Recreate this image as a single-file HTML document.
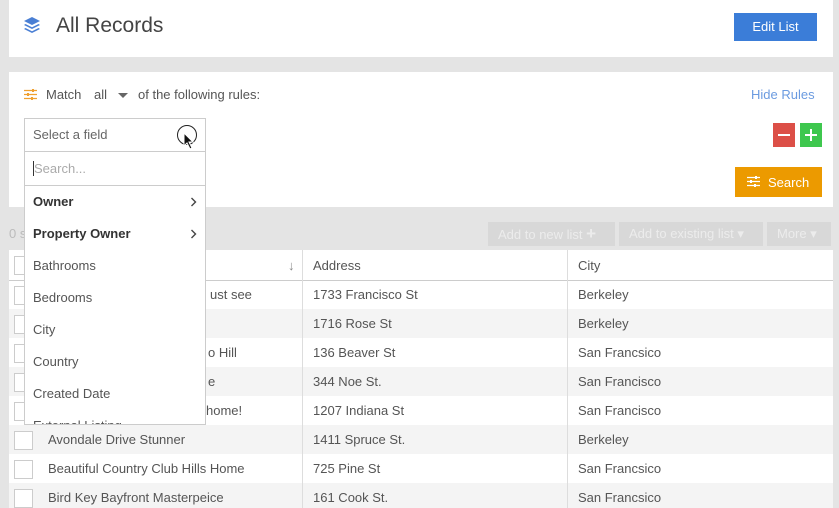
<!DOCTYPE html>
<html><head><style>
*{box-sizing:border-box;margin:0;padding:0}
html,body{width:839px;height:508px;overflow:hidden}
body{background:#e4e4e4;font-family:"Liberation Sans",sans-serif;position:relative;color:#555}
.abs{position:absolute}
.t{font-size:13px;white-space:nowrap}
</style></head><body>
<div class="abs" style="left:9px;top:0;width:824px;height:57px;background:#fff"></div>
<svg class="abs" style="left:23px;top:16px" width="18" height="19" viewBox="0 0 18 19"><path d="M9 1L17 5 9 9 1 5Z" fill="#4a7fd4"/><path d="M2.5 8L9 11.2 15.5 8 17 9 9 13 1 9Z" fill="#4a7fd4"/><path d="M2.5 12L9 15.2 15.5 12 17 13 9 17 1 13Z" fill="#4a7fd4"/></svg>
<div class="abs" style="left:56px;top:14px;font-size:21px;color:#444">All Records</div>
<div class="abs t" style="left:734px;top:13px;width:83px;height:28px;background:#3b7dd8;color:#fff;text-align:center;line-height:28px">Edit List</div>

<div class="abs" style="left:9px;top:72px;width:824px;height:135px;background:#fff"></div>
<svg class="abs" style="left:24px;top:89px" width="13" height="11"><g stroke="#f0a030" stroke-width="1.3"><path d="M0 1.5H13M0 5.5H13M0 9.5H13"/></g><g fill="#f0a030"><rect x="8" y="0" width="2" height="3"/><rect x="3" y="4" width="2" height="3"/><rect x="7" y="8" width="2" height="3"/></g></svg>
<div class="abs t" style="left:46px;top:87px">Match</div>
<div class="abs t" style="left:94px;top:87px">all</div>
<div class="abs" style="left:118px;top:93px;border:5px solid transparent;border-top:5px solid #666;border-bottom:0"></div>
<div class="abs t" style="left:138px;top:87px">of the following rules:</div>
<div class="abs t" style="left:751px;top:87px;color:#6b9be0">Hide Rules</div>
<div class="abs" style="left:773px;top:123px;width:22px;height:24px;background:#dc4f47"><div class="abs" style="left:5px;top:11px;width:12px;height:2px;background:#fff"></div></div>
<div class="abs" style="left:800px;top:123px;width:22px;height:24px;background:#3ec74e"><div class="abs" style="left:5px;top:11px;width:12px;height:2px;background:#fff"></div><div class="abs" style="left:10px;top:6px;width:2px;height:12px;background:#fff"></div></div>
<div class="abs" style="left:735px;top:167px;width:87px;height:30px;background:#ec9a00"></div>
<svg class="abs" style="left:747px;top:176px" width="13" height="11"><g stroke="#fff" stroke-width="1.3"><path d="M0 1.5H13M0 5.5H13M0 9.5H13"/></g><g fill="#fff"><rect x="8" y="0" width="2" height="3"/><rect x="3" y="4" width="2" height="3"/><rect x="7" y="8" width="2" height="3"/></g></svg>
<div class="abs t" style="left:768px;top:175px;color:#fff">Search</div>

<div class="abs t" style="left:9px;top:226px;color:#bbb">0 s</div>
<div class="abs t" style="left:488px;top:222px;width:127px;height:24px;background:#d8d8d8;color:#ececec;line-height:24px;padding-left:10px">Add to new list <b style="font-size:17px">+</b></div>
<div class="abs t" style="left:619px;top:222px;width:144px;height:24px;background:#d8d8d8;color:#ececec;line-height:24px;padding-left:10px">Add to existing list ▾</div>
<div class="abs t" style="left:767px;top:222px;width:64px;height:24px;background:#d8d8d8;color:#ececec;line-height:24px;padding-left:10px">More ▾</div>

<div class="abs" style="left:9px;top:250px;width:824px;height:258px;background:#fff"></div>
<div class="abs" style="left:9px;top:280px;width:824px;height:1px;background:#ccc"></div>
<div class="abs t" style="left:288px;top:258px;color:#888">↓</div>
<div class="abs t" style="left:313px;top:258px">Address</div>
<div class="abs t" style="left:578px;top:258px">City</div>
<div class="abs" style="left:14px;top:256px;width:19px;height:19px;border:1px solid #ccc;background:#fff"></div>

<div class="abs" style="left:9px;top:309px;width:824px;height:29px;background:#f4f4f4"></div>
<div class="abs" style="left:9px;top:367px;width:824px;height:29px;background:#f4f4f4"></div>
<div class="abs" style="left:9px;top:425px;width:824px;height:29px;background:#f4f4f4"></div>
<div class="abs" style="left:9px;top:483px;width:824px;height:29px;background:#f4f4f4"></div>
<div class="abs" style="left:302px;top:250px;width:1px;height:258px;background:#ddd"></div>
<div class="abs" style="left:567px;top:250px;width:1px;height:258px;background:#ddd"></div>

<div class="abs" style="left:14px;top:286px;width:19px;height:19px;border:1px solid #ccc;background:#fff"></div>
<div class="abs" style="left:14px;top:315px;width:19px;height:19px;border:1px solid #ccc;background:#fff"></div>
<div class="abs" style="left:14px;top:344px;width:19px;height:19px;border:1px solid #ccc;background:#fff"></div>
<div class="abs" style="left:14px;top:373px;width:19px;height:19px;border:1px solid #ccc;background:#fff"></div>
<div class="abs" style="left:14px;top:402px;width:19px;height:19px;border:1px solid #ccc;background:#fff"></div>
<div class="abs" style="left:14px;top:431px;width:19px;height:19px;border:1px solid #ccc;background:#fff"></div>
<div class="abs" style="left:14px;top:460px;width:19px;height:19px;border:1px solid #ccc;background:#fff"></div>
<div class="abs" style="left:14px;top:489px;width:19px;height:19px;border:1px solid #ccc;background:#fff"></div>

<div class="abs t" style="left:210px;top:287px">ust see</div>
<div class="abs t" style="left:208px;top:345px">o Hill</div>
<div class="abs t" style="left:208px;top:374px">e</div>
<div class="abs t" style="left:206px;top:403px">home!</div>
<div class="abs t" style="left:48px;top:432px">Avondale Drive Stunner</div>
<div class="abs t" style="left:48px;top:461px">Beautiful Country Club Hills Home</div>
<div class="abs t" style="left:48px;top:490px">Bird Key Bayfront Masterpeice</div>

<div class="abs t" style="left:313px;top:287px">1733 Francisco St</div>
<div class="abs t" style="left:313px;top:316px">1716 Rose St</div>
<div class="abs t" style="left:313px;top:345px">136 Beaver St</div>
<div class="abs t" style="left:313px;top:374px">344 Noe St.</div>
<div class="abs t" style="left:313px;top:403px">1207 Indiana St</div>
<div class="abs t" style="left:313px;top:432px">1411 Spruce St.</div>
<div class="abs t" style="left:313px;top:461px">725 Pine St</div>
<div class="abs t" style="left:313px;top:490px">161 Cook St.</div>
<div class="abs t" style="left:578px;top:287px">Berkeley</div>
<div class="abs t" style="left:578px;top:316px">Berkeley</div>
<div class="abs t" style="left:578px;top:345px">San Francsico</div>
<div class="abs t" style="left:578px;top:374px">San Francisco</div>
<div class="abs t" style="left:578px;top:403px">San Francisco</div>
<div class="abs t" style="left:578px;top:432px">Berkeley</div>
<div class="abs t" style="left:578px;top:461px">San Francsico</div>
<div class="abs t" style="left:578px;top:490px">San Francsico</div>

<!-- dropdown -->
<div class="abs" style="left:24px;top:118px;width:182px;height:307px;background:#fff;border:1px solid #ccc;overflow:hidden">
  <div class="abs t" style="left:8px;top:8px;color:#666">Select a field</div>
  <div class="abs" style="left:152px;top:6px;width:20px;height:20px;border:1.5px solid #222;border-radius:50%"></div>
  <div class="abs" style="left:0;top:32px;width:182px;height:1px;background:#ccc"></div>
  <div class="abs" style="left:8px;top:42px;width:1px;height:15px;background:#333"></div>
  <div class="abs t" style="left:9px;top:42px;color:#aaa">Search...</div>
  <div class="abs" style="left:0;top:66px;width:182px;height:1px;background:#ccc"></div>
  <div class="abs t" style="left:8px;top:75px;font-weight:bold;color:#333">Owner</div>
  <svg class="abs" style="left:165px;top:78px" width="7" height="10"><path d="M1.5 1L5.5 5 1.5 9" fill="none" stroke="#444" stroke-width="1.4"/></svg>
  <div class="abs t" style="left:8px;top:107px;font-weight:bold;color:#333">Property Owner</div>
  <svg class="abs" style="left:165px;top:110px" width="7" height="10"><path d="M1.5 1L5.5 5 1.5 9" fill="none" stroke="#444" stroke-width="1.4"/></svg>
  <div class="abs t" style="left:8px;top:139px">Bathrooms</div>
  <div class="abs t" style="left:8px;top:171px">Bedrooms</div>
  <div class="abs t" style="left:8px;top:203px">City</div>
  <div class="abs t" style="left:8px;top:235px">Country</div>
  <div class="abs t" style="left:8px;top:267px">Created Date</div>
  <div class="abs t" style="left:8px;top:299px">External Listing</div>
</div>
<svg class="abs" style="left:183px;top:132px" width="12" height="18"><path d="M1 1L1 14 4 11 7 17 9 16 6 10 10 10Z" fill="#111" stroke="#fff" stroke-width="1"/></svg>
</body></html>
